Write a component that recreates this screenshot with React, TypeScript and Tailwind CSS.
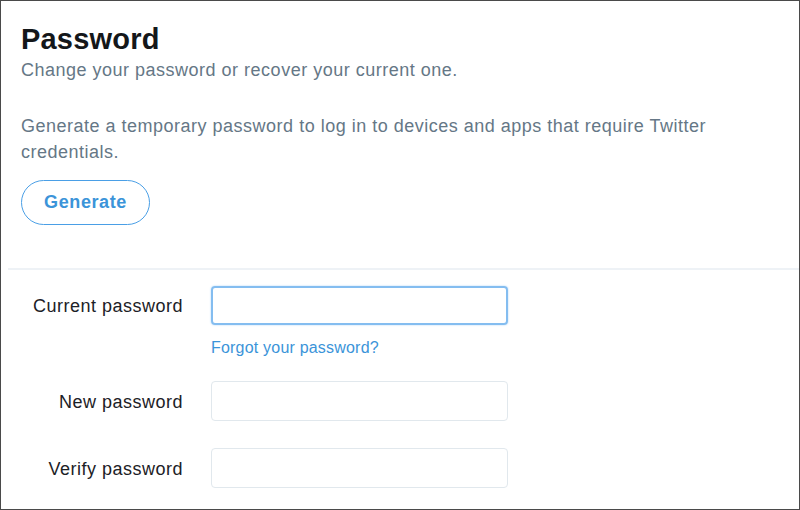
import React from "react";

export default function App() {
  const font = { fontFamily: '"Liberation Sans", Arial, sans-serif' };
  return (
    <div
      className="w-[800px] h-[510px] bg-white border border-[#4a4a4a] overflow-hidden box-border"
      style={font}
    >
      <div className="pl-[20px] pt-[21px]">
        <h1 className="text-[29px] leading-[34px] font-bold text-[#14171a] tracking-[0.2px]">
          Password
        </h1>
        <p className="mt-[2px] text-[18px] leading-[24px] text-[#657786] tracking-[0.5px]">
          Change your password or recover your current one.
        </p>
        <p className="mt-[31px] text-[18px] leading-[26px] text-[#657786] tracking-[0.5px] w-[720px]">
          Generate a temporary password to log in to devices and apps that require Twitter credentials.
        </p>
        <button className="mt-[15px] w-[129px] h-[45px] rounded-full border border-[#4a9fe6] text-[#3b94d9] text-[18px] font-bold tracking-[0.6px] bg-white">
          Generate
        </button>
      </div>
      <div className="ml-[7px] mt-[43px] h-[2px] bg-[#eef2f6]" />
      <div className="pt-[16px]">
        <div className="flex items-center">
          <label className="w-[182px] text-right text-[18px] tracking-[0.5px] text-[#1c2126] pt-[2px]">Current password</label>
          <div className="ml-[28px] w-[297px] h-[39px] rounded-[4px] border-2 border-[#84bdf0] shadow-[0_0_2px_#a9d2f6]" />
        </div>
        <div className="ml-[210px] mt-[13px] text-[16px] leading-[20px] tracking-[0.2px] text-[#3b94d9]">
          Forgot your password?
        </div>
        <div className="flex items-center mt-[23px]">
          <label className="w-[182px] text-right text-[18px] tracking-[0.5px] text-[#1c2126] pt-[2px]">New password</label>
          <div className="ml-[28px] w-[297px] h-[40px] rounded-[4px] border border-[#e1e8ed]" />
        </div>
        <div className="flex items-center mt-[27px]">
          <label className="w-[182px] text-right text-[18px] tracking-[0.5px] text-[#1c2126] pt-[2px]">Verify password</label>
          <div className="ml-[28px] w-[297px] h-[40px] rounded-[4px] border border-[#e1e8ed]" />
        </div>
      </div>
    </div>
  );
}
